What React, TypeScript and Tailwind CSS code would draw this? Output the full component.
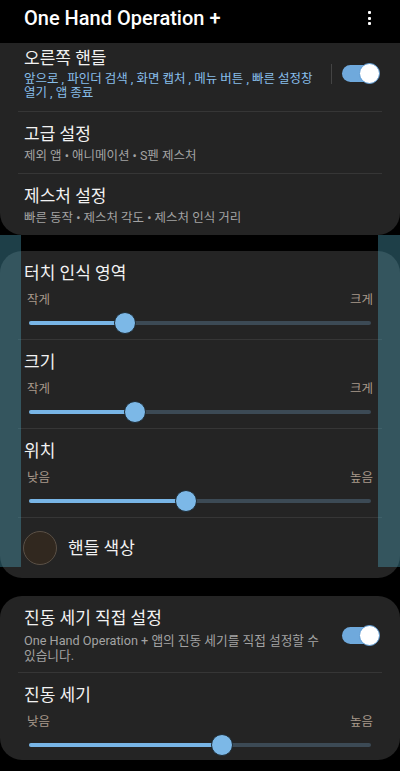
import React from "react";

function Toggle() {
  return (
    <div className="relative w-[38px] h-[21px] shrink-0">
      <div className="absolute left-0 top-[2px] w-[34px] h-[17px] rounded-full bg-[#6fa9dc]" />
      <div className="absolute right-0 top-0 w-[21px] h-[21px] rounded-full bg-white border-[1.5px] border-[#5e9bd3]" />
    </div>
  );
}

function Slider({ pct }: { pct: number }) {
  return (
    <div className="px-[29px]">
      <div className="relative h-[22px] flex items-center">
        <div className="w-full h-[4px] rounded-full bg-[#3c4a55] flex">
          <div className="h-full rounded-full bg-[#78b5e6]" style={{ width: `${pct}%` }} />
        </div>
        <div
          className="absolute top-0 w-[22px] h-[22px] -ml-[11px] rounded-full bg-[#7cb8e7] border border-[#1d2a33]"
          style={{ left: `${pct}%` }}
        />
      </div>
    </div>
  );
}

function SliderRow({ title, left, right, pct, pb = "pb-[5px]" }: { title: string; left: string; right: string; pct: number; pb?: string }) {
  return (
    <div className={`pt-[12px] ${pb}`}>
      <div className="px-6 text-[17px] leading-[20px] text-[#f2f2f2]">{title}</div>
      <div className="mt-[9px] pl-[27px] pr-[27px] flex justify-between text-[12.5px] leading-[16px] text-[#a8998b]">
        <span>{left}</span>
        <span>{right}</span>
      </div>
      <div className="mt-[4px]">
        <Slider pct={pct} />
      </div>
    </div>
  );
}

function Divider() {
  return <div className="mx-[18px] h-px bg-[#363636]" />;
}

export default function App() {
  return (
    <div className="relative w-[400px] h-[771px] overflow-hidden bg-black font-['Roboto','Noto_Sans_CJK_KR',sans-serif]">
      {/* Header */}
      <div className="h-[43px] flex items-center justify-between pl-6 pr-[29px] pb-[7px]">
        <div className="text-[20px] leading-[24px] font-medium text-white">One Hand Operation +</div>
        <div className="flex flex-col gap-[2.5px]">
          <div className="w-[3px] h-[3px] bg-white rounded-[1px]" />
          <div className="w-[3px] h-[3px] bg-white rounded-[1px]" />
          <div className="w-[3px] h-[3px] bg-white rounded-[1px]" />
        </div>
      </div>

      {/* Card 1 */}
      <div className="bg-[#242424] rounded-b-[22px]">
        <div className="flex items-start pt-[5px] pb-[11px]">
          <div className="flex-1 pl-6">
            <div className="text-[17px] leading-[20px] text-[#f2f2f2]">오른쪽 핸들</div>
            <div className="mt-[4px] text-[12.5px] leading-[14px] text-[#88bfeb]">
              앞으로 , 파인더 검색 , 화면 캡처 , 메뉴 버튼 , 빠른 설정창
              <br />
              열기 , 앱 종료
            </div>
          </div>
          <div className="flex items-center mt-[15px] pr-[20px]">
            <div className="w-px h-[20px] bg-[#444444] mr-[10px]" />
            <Toggle />
          </div>
        </div>
        <Divider />
        <div className="pt-[12px] pb-[9px] px-6">
          <div className="text-[17px] leading-[20px] text-[#f2f2f2]">고급 설정</div>
          <div className="mt-[4px] text-[12.5px] leading-[16px] text-[#a3a3a3]">제외 앱 • 애니메이션 • S펜 제스처</div>
        </div>
        <Divider />
        <div className="pt-[12px] pb-[9px] px-6">
          <div className="text-[17px] leading-[20px] text-[#f2f2f2]">제스처 설정</div>
          <div className="mt-[4px] text-[12.5px] leading-[16px] text-[#a3a3a3]">빠른 동작 • 제스처 각도 • 제스처 인식 거리</div>
        </div>
      </div>

      {/* Card 2 */}
      <div className="mt-[16px] bg-[#242424] rounded-[22px]">
        <SliderRow title="터치 인식 영역" left="작게" right="크게" pct={28} />
        <Divider />
        <SliderRow title="크기" left="작게" right="크게" pct={31} />
        <Divider />
        <SliderRow title="위치" left="낮음" right="높음" pct={46} />
        <Divider />
        <div className="h-[60px] flex items-center pl-[23px]">
          <div className="w-[34px] h-[34px] rounded-full bg-[#31281f] border border-[#5a5046]" />
          <div className="ml-[11px] text-[17px] leading-[20px] text-[#f2f2f2]">핸들 색상</div>
        </div>
      </div>

      {/* Card 3 */}
      <div className="mt-[18px] bg-[#242424] rounded-[22px]">
        <div className="flex items-center pt-[12px] pb-[9px]">
          <div className="flex-1 pl-6">
            <div className="text-[17px] leading-[20px] text-[#f2f2f2]">진동 세기 직접 설정</div>
            <div className="mt-[5px] text-[12.7px] leading-[15px] text-[#a3a3a3]">
              One Hand Operation + 앱의 진동 세기를 직접 설정할 수
              <br />
              있습니다.
            </div>
          </div>
          <div className="pr-[20px]">
            <Toggle />
          </div>
        </div>
        <Divider />
        <SliderRow title="진동 세기" left="낮음" right="높음" pct={56.5} pb="pb-[4px]" />
      </div>

      {/* Handle overlay */}
      <div className="absolute left-0 top-[235px] w-[21px] h-[332px] bg-[rgba(80,165,190,0.38)]" />
      <div className="absolute right-0 top-[235px] w-[22px] h-[332px] bg-[rgba(80,165,190,0.38)]" />
    </div>
  );
}
